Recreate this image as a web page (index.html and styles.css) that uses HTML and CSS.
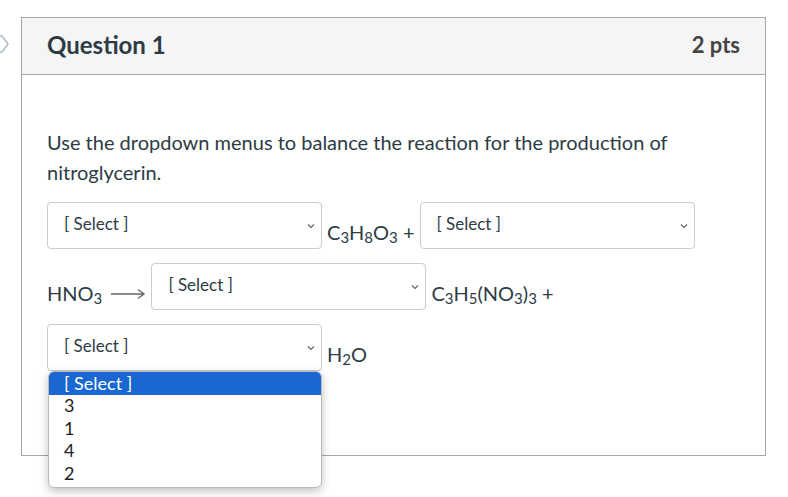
FILE: index.html
```html
<!DOCTYPE html>
<html>
<head>
<meta charset="utf-8">
<link rel="stylesheet" href="styles.css">
</head>
<body>
<div class="page">
  <div class="flag">
    <svg width="10" height="24" viewBox="0 0 10 24"><path d="M-8 4 H2 L8 12 L2 20 H-8" fill="#fff" stroke="#a9bccb" stroke-width="1.5"/></svg>
  </div>
  <div class="card">
    <div class="card-header">
      <span class="title">Question 1</span>
      <span class="pts">2 pts</span>
    </div>
    <div class="card-body">
      <p class="prompt">Use the dropdown menus to balance the reaction for the production of nitroglycerin.</p>
      <div class="equation">
        <div class="select"><span>[ Select ]</span><svg class="chev" width="8" height="6" viewBox="0 0 8 6"><path d="M1 1.5 L4 4.5 L7 1.5" fill="none" stroke="#666" stroke-width="1.2"/></svg></div>
        <span class="chem">C<sub>3</sub>H<sub>8</sub>O<sub>3</sub> +</span>
        <div class="select"><span>[ Select ]</span><svg class="chev" width="8" height="6" viewBox="0 0 8 6"><path d="M1 1.5 L4 4.5 L7 1.5" fill="none" stroke="#666" stroke-width="1.2"/></svg></div>
        <span class="chem">HNO<sub>3</sub> <svg class="arrow" width="36" height="12" viewBox="0 0 36 12"><path d="M1 6 H34 M28 1.5 L34 6 L28 10.5" fill="none" stroke="#666" stroke-width="1.4"/></svg></span>
        <div class="select"><span>[ Select ]</span><svg class="chev" width="8" height="6" viewBox="0 0 8 6"><path d="M1 1.5 L4 4.5 L7 1.5" fill="none" stroke="#666" stroke-width="1.2"/></svg></div>
        <span class="chem">C<sub>3</sub>H<sub>5</sub>(NO<sub>3</sub>)<sub>3</sub> +</span>
        <div class="select open"><span>[ Select ]</span><svg class="chev" width="8" height="6" viewBox="0 0 8 6"><path d="M1 1.5 L4 4.5 L7 1.5" fill="none" stroke="#666" stroke-width="1.2"/></svg>
          <ul class="menu">
            <li class="active">[ Select ]</li>
            <li>3</li>
            <li>1</li>
            <li>4</li>
            <li>2</li>
          </ul>
        </div>
        <span class="chem">H<sub>2</sub>O</span>
      </div>
    </div>
  </div>
</div>
</body>
</html>
```

FILE: styles.css
```css
html, body {
  margin: 0;
  padding: 0;
  background: #fff;
}
body {
  font-family: Lato, "Noto Sans", sans-serif;
  color: #2d3b45;
  width: 788px;
  height: 497px;
  overflow: hidden;
}
.page {
  display: flex;
  align-items: flex-start;
  padding-top: 17px;
}
.flag {
  width: 21px;
  padding-top: 15px;
  flex: none;
}
.flag svg {
  display: block;
}
.card {
  width: 743px;
  border: 1px solid #a8a8a8;
  flex: none;
}
.card-header {
  height: 57px;
  box-sizing: border-box;
  padding: 0 25px 4px;
  background: #f5f5f5;
  border-bottom: 1px solid #a8a8a8;
  display: flex;
  align-items: center;
  justify-content: space-between;
}
.title {
  font-weight: 700;
  font-size: 24px;
}
.pts {
  font-weight: 700;
  font-size: 22px;
  color: #444;
}
.card-body {
  padding: 52px 25px 84px;
}
.prompt {
  margin: 0;
  font-size: 20px;
  line-height: 30px;
}
.equation {
  margin-top: 15px;
  display: flex;
  flex-wrap: wrap;
  align-items: flex-start;
  column-gap: 5px;
  row-gap: 14px;
}
.select {
  position: relative;
  width: 275px;
  height: 47px;
  box-sizing: border-box;
  border: 1px solid #c7cdd1;
  border-radius: 4px;
  background: #fff;
  display: flex;
  align-items: center;
  justify-content: space-between;
  padding: 0 6px 0 16px;
  font-size: 17px;
}
.select span {
  margin-top: -4px;
}
.chev {
  display: block;
}
.chem {
  font-size: 20px;
  padding-top: 19px;
  line-height: 22px;
  white-space: nowrap;
}
.chem sub {
  font-size: 0.75em;
  vertical-align: -0.2em;
  line-height: 0;
}
.arrow {
  vertical-align: 1px;
  margin-left: 3px;
}
.menu {
  position: absolute;
  left: 0;
  top: 46px;
  width: 272px;
  margin: 0;
  padding: 0 0 2px;
  list-style: none;
  background: #fff;
  border: 1px solid #bbb;
  border-radius: 6px;
  box-shadow: 0 3px 10px rgba(0,0,0,0.25);
  overflow: hidden;
  font-size: 18px;
  color: #222;
  z-index: 2;
}
.menu li {
  height: 22.5px;
  line-height: 21px;
  padding-left: 15px;
}
.menu li.active {
  height: 23px;
  line-height: 22px;
  background: #1a67d2;
  color: #fff;
}
```
